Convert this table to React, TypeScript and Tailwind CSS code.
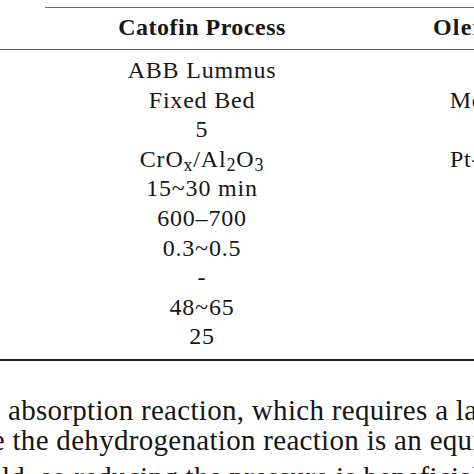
const rows: Array<[React.ReactNode, React.ReactNode]> = [
  ["ABB Lummus", "UOP"],
  ["Fixed Bed", "Moving Bed"],
  ["5", "4"],
  [
    <>
      CrO<sub>x</sub>/Al<sub>2</sub>O<sub>3</sub>
    </>,
    <>
      Pt-Sn/Al<sub>2</sub>O<sub>3</sub>
    </>,
  ],
  ["15~30 min", "7 d"],
  ["600–700", "600"],
  ["0.3~0.5", "1~3"],
  ["-", "-"],
  ["48~65", "35"],
  ["25", "15"],
];

export default function App() {
  return (
    <div className="w-[474px] h-[474px] overflow-hidden bg-white text-[#161616] font-['Liberation_Serif',serif]">
      {/* table */}
      <div className="pt-[7px] text-[24px] leading-[29.6px] tracking-[0.8px]">
        <div className="border-b border-[#5a5a5a] w-[700px]">
          <div className="ml-[45px] flex border-t border-[#6e6e6e] pt-[4px] pb-[7px] font-bold tracking-[0.5px] leading-[30px]">
            <div className="w-[314px] shrink-0 text-center">Catofin Process</div>
            <div className="w-[322px] shrink-0 text-center tracking-[1.2px]">Oleflex Process</div>
          </div>
        </div>
        <div className="border-b-2 border-[#222] w-[700px] pt-[6px] pb-[7px]">
          {rows.map(([a, b], i) => (
            <div key={i} className="ml-[45px] flex whitespace-nowrap">
              <div className="w-[314px] shrink-0 text-center">{a}</div>
              <div className="w-[310px] shrink-0 text-center">{b}</div>
            </div>
          ))}
        </div>
      </div>

      {/* body text */}
      <div className="mt-[34px] text-[29px] leading-[30px] tracking-[0.3px] whitespace-nowrap">
        <div className="ml-[8px]">absorption reaction, which requires a large amount</div>
        <div className="-ml-[61px]">while the dehydrogenation reaction is an equilibrium</div>
        <div className="ml-[2px] mt-[7px]">ld, so reducing the pressure is beneficial to</div>
      </div>
    </div>
  );
}
